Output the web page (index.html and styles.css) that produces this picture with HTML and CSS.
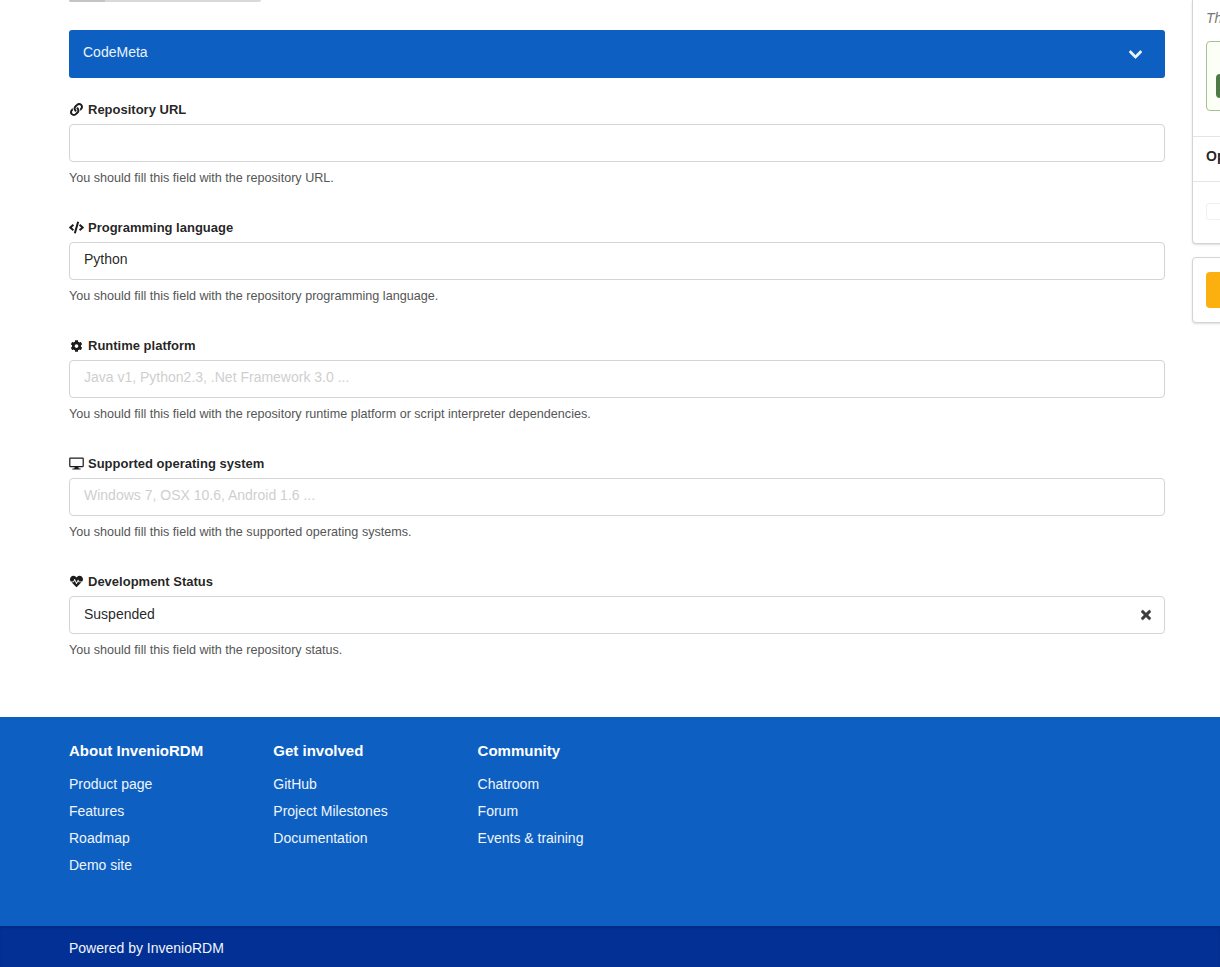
FILE: index.html
```html
<!DOCTYPE html>
<html lang="en">
<head>
<meta charset="utf-8">
<title>CodeMeta</title>
<link rel="stylesheet" href="styles.css">
</head>
<body>
<div class="page">
  <div class="workspace">
    <main class="main">
      <div class="progress"><div class="progress-fill"></div></div>
      <div class="accordion-head">
        <span class="accordion-title">CodeMeta</span>
        <svg class="chevron" viewBox="0 0 448 512"><path d="M207.029 381.476L12.686 187.132c-9.373-9.373-9.373-24.569 0-33.941l22.667-22.667c9.357-9.357 24.522-9.375 33.901-.04L224 284.505l154.745-154.021c9.379-9.335 24.544-9.317 33.901.04l22.667 22.667c9.373 9.373 9.373 24.569 0 33.941L240.971 381.476c-9.373 9.372-24.569 9.372-33.942 0z"/></svg>
      </div>
      <div class="fields">
        <div class="field">
          <label class="label">
            <svg class="icon" viewBox="0 0 512 512"><path d="M326.612 185.391c59.747 59.809 58.927 155.698.36 214.59-.11.12-.24.25-.36.37l-67.2 67.2c-59.27 59.27-155.699 59.262-214.96 0-59.27-59.26-59.27-155.7 0-214.96l37.106-37.106c9.84-9.84 26.786-3.3 27.294 10.606.648 17.722 3.826 35.527 9.69 52.721 1.986 5.822.567 12.262-3.783 16.612l-13.087 13.087c-28.026 28.026-28.905 73.66-1.155 101.96 28.024 28.579 74.086 28.749 102.325.51l67.2-67.19c28.191-28.191 28.073-73.757 0-101.83-3.701-3.694-7.429-6.564-10.341-8.569a16.037 16.037 0 0 1-6.947-12.606c-.396-10.567 3.348-21.456 11.698-29.806l21.054-21.055c5.521-5.521 14.182-6.199 20.584-1.731a152.482 152.482 0 0 1 20.522 17.197zM467.547 44.449c-59.261-59.262-155.69-59.27-214.96 0l-67.2 67.2c-.12.12-.25.25-.36.37-58.566 58.892-59.387 154.781.36 214.59a152.454 152.454 0 0 0 20.521 17.196c6.402 4.468 15.064 3.789 20.584-1.731l21.054-21.055c8.35-8.35 12.094-19.239 11.698-29.806a16.037 16.037 0 0 0-6.947-12.606c-2.912-2.005-6.64-4.875-10.341-8.569-28.073-28.073-28.191-73.639 0-101.83l67.2-67.19c28.239-28.239 74.3-28.069 102.325.51 27.75 28.3 26.872 73.934-1.155 101.96l-13.087 13.087c-4.35 4.35-5.769 10.79-3.783 16.612 5.864 17.194 9.042 34.999 9.69 52.721.509 13.906 17.454 20.446 27.294 10.606l37.106-37.106c59.271-59.259 59.271-155.699.001-214.959z"/></svg>
            Repository URL
          </label>
          <div class="input"></div>
          <p class="help">You should fill this field with the repository URL.</p>
        </div>
        <div class="field">
          <label class="label">
            <svg class="icon" viewBox="0 0 640 512"><path d="M278.9 511.5l-61-17.7c-6.4-1.8-10-8.5-8.2-14.9L346.2 8.7c1.8-6.4 8.5-10 14.9-8.2l61 17.7c6.4 1.8 10 8.5 8.2 14.9L293.8 503.3c-1.9 6.4-8.5 10.1-14.9 8.2zm-114-112.2l43.5-46.4c4.6-4.9 4.3-12.7-.8-17.2L117 256l90.6-79.7c5.1-4.5 5.5-12.3.8-17.2l-43.5-46.4c-4.5-4.8-12.1-5.1-17-.5L3.8 247.2c-5.1 4.7-5.1 12.8 0 17.5l144.1 135.1c4.9 4.6 12.5 4.4 17-.5zm327.2.6l144.1-135.1c5.1-4.7 5.1-12.8 0-17.5L492.1 112.1c-4.8-4.5-12.4-4.3-17 .5L431.6 159c-4.6 4.9-4.3 12.7.8 17.2L523 256l-90.6 79.7c-5.1 4.5-5.5 12.3-.8 17.2l43.5 46.4c4.5 4.9 12.1 5.1 17 .6z"/></svg>
            Programming language
          </label>
          <div class="input">Python</div>
          <p class="help">You should fill this field with the repository programming language.</p>
        </div>
        <div class="field">
          <label class="label">
            <svg class="icon icon-small" viewBox="0 0 512 512"><path d="M487.4 315.7l-42.6-24.6c4.3-23.2 4.3-47 0-70.2l42.6-24.6c4.9-2.8 7.1-8.6 5.5-14-11.1-35.6-30-67.8-54.7-94.6-3.8-4.1-10-5.1-14.8-2.3L380.8 110c-17.9-15.4-38.5-27.3-60.8-35.1V25.8c0-5.6-3.9-10.5-9.4-11.7-36.7-8.2-74.3-7.8-109.2 0-5.5 1.2-9.4 6.1-9.4 11.7V75c-22.2 7.9-42.8 19.8-60.8 35.1L88.7 85.5c-4.9-2.8-11-1.9-14.8 2.3-24.7 26.7-43.6 58.9-54.7 94.6-1.7 5.4.6 11.2 5.5 14L67.3 221c-4.3 23.2-4.3 47 0 70.2l-42.6 24.6c-4.9 2.8-7.1 8.6-5.5 14 11.1 35.6 30 67.8 54.7 94.6 3.8 4.1 10 5.1 14.8 2.3l42.6-24.6c17.9 15.4 38.5 27.3 60.8 35.1v49.2c0 5.6 3.9 10.5 9.4 11.7 36.7 8.2 74.3 7.8 109.2 0 5.5-1.2 9.4-6.1 9.4-11.7v-49.2c22.2-7.9 42.8-19.8 60.8-35.1l42.6 24.6c4.9 2.8 11 1.9 14.8-2.3 24.7-26.7 43.6-58.9 54.7-94.6 1.5-5.5-.7-11.3-5.6-14.1zM256 336c-44.1 0-80-35.9-80-80s35.9-80 80-80 80 35.9 80 80-35.9 80-80 80z"/></svg>
            Runtime platform
          </label>
          <div class="input placeholder">Java v1, Python2.3, .Net Framework 3.0 ...</div>
          <p class="help">You should fill this field with the repository runtime platform or script interpreter dependencies.</p>
        </div>
        <div class="field">
          <label class="label">
            <svg class="icon" viewBox="0 0 576 512"><path d="M528 16H48C21.5 16 0 37.500 0 64v288c0 26.500 21.500 48 48 48h168l-16 48h-56c-13.300 0-24 10.700-24 24s10.700 24 24 24h288c13.300 0 24-10.700 24-24s-10.700-24-24-24h-56l-16-48h168c26.500 0 48-21.500 48-48V64c0-26.500-21.500-48-48-48zm-6 336H54c-3.300 0-6-2.700-6-6V70c0-3.300 2.700-6 6-6h468c3.300 0 6 2.700 6 6v276c0 3.300-2.700 6-6 6z"/></svg>
            Supported operating system
          </label>
          <div class="input placeholder">Windows 7, OSX 10.6, Android 1.6 ...</div>
          <p class="help">You should fill this field with the supported operating systems.</p>
        </div>
        <div class="field">
          <label class="label">
            <svg class="icon" viewBox="0 0 512 512"><path d="M320.2 243.8l-49.7 99.4c-6 12.1-23.4 11.7-28.9-.6l-56.9-126.3-30 71.7H60.6l182.5 186.5c7.1 7.3 18.6 7.3 25.7 0L451.4 288H342.3l-22.1-44.2zM473.7 73.9l-2.4-2.5c-51.5-52.6-135.8-52.6-187.4 0L256 100l-27.9-28.5c-51.5-52.7-135.9-52.7-187.4 0l-2.4 2.4C-10.4 123.7-12.5 203 31 256h102.4l35.9-86.2c5.4-12.9 23.6-13.2 29.4-.4l58.2 129.3 49-97.9c5.9-11.800 22.700-11.800 28.600 0l27.600 55.200H481c43.500-53 41.400-132.300-7.300-182.100z"/></svg>
            Development Status
          </label>
          <div class="input select">
            <span>Suspended</span>
            <svg class="clear" viewBox="0 0 352 512"><path d="M242.72 256l100.07-100.07c12.28-12.28 12.28-32.19 0-44.48l-22.24-22.24c-12.28-12.28-32.19-12.28-44.48 0L176 189.28 75.93 89.21c-12.28-12.28-32.19-12.28-44.48 0L9.21 111.45c-12.28 12.28-12.28 32.19 0 44.48L109.28 256 9.21 356.07c-12.28 12.28-12.28 32.19 0 44.48l22.24 22.24c12.28 12.28 32.2 12.28 44.48 0L176 322.72l100.07 100.07c12.28 12.28 32.2 12.28 44.48 0l22.24-22.24c12.28-12.28 12.28-32.19 0-44.48L242.72 256z"/></svg>
          </div>
          <p class="help">You should fill this field with the repository status.</p>
        </div>
      </div>
    </main>
    <aside class="aside">
      <div class="card card-top">
        <div class="card-section notice-section">
          <p class="notice-text">The</p>
          <div class="notice"><div class="notice-button"></div></div>
        </div>
        <div class="card-section options-title">Options</div>
        <div class="card-section options-body"><div class="checkbox"></div></div>
      </div>
      <div class="card card-action">
        <div class="action-button"></div>
      </div>
    </aside>
  </div>
  <footer class="footer">
    <div class="footer-columns">
      <div class="footer-col">
        <h4 class="footer-title">About InvenioRDM</h4>
        <a class="footer-link">Product page</a>
        <a class="footer-link">Features</a>
        <a class="footer-link">Roadmap</a>
        <a class="footer-link">Demo site</a>
      </div>
      <div class="footer-col">
        <h4 class="footer-title">Get involved</h4>
        <a class="footer-link">GitHub</a>
        <a class="footer-link">Project Milestones</a>
        <a class="footer-link">Documentation</a>
      </div>
      <div class="footer-col">
        <h4 class="footer-title">Community</h4>
        <a class="footer-link">Chatroom</a>
        <a class="footer-link">Forum</a>
        <a class="footer-link">Events &amp; training</a>
      </div>
    </div>
    <div class="footer-bottom">Powered by InvenioRDM</div>
  </footer>
</div>
</body>
</html>
```
FILE: styles.css
```css
* { box-sizing: border-box; }
html, body { margin: 0; padding: 0; background: #fff; }
body { font-family: "Liberation Sans", Arial, sans-serif; color: rgba(0,0,0,.87); overflow: hidden; }
.page { width: 1220px; height: 967px; overflow: hidden; display: flex; flex-direction: column; }
.workspace { height: 717px; display: flex; padding-left: 69px; overflow: hidden; }
.main { width: 1096px; flex: none; }
.progress { width: 192px; height: 2px; background: #d9d9d9; border-radius: 0 0 4px 4px; overflow: hidden; }
.progress-fill { width: 36px; height: 2px; background: #c4c4c4; }
.accordion-head { margin-top: 28px; height: 48px; background: #0d60c2; border-radius: 3px; color: #eaf2fb; font-size: 14px; display: flex; align-items: center; justify-content: space-between; padding: 0 23px 0 14px; }
.accordion-title { padding-bottom: 4px; }
.chevron { width: 13px; height: 15px; fill: #eaf2fb; margin-top: 1px; stroke: #eaf2fb; stroke-width: 24; }
.fields { margin-top: 24px; }
.field { height: 118px; }
.label { height: 15px; display: flex; align-items: center; gap: 4px; font-size: 13px; font-weight: 700; line-height: 15px; color: rgba(0,0,0,.87); }
.icon { height: 13px; width: 15px; flex: none; fill: #1c1c1c; }
.icon-small { height: 12px; }
.input { margin-top: 7px; height: 38px; border: 1px solid #d4d4d5; border-radius: 4px; padding: 0 14px 4px; display: flex; align-items: center; font-size: 14px; color: rgba(0,0,0,.87); background: #fff; }
.placeholder { color: #cfcfcf; }
.select { justify-content: space-between; padding: 0 13px 2px 14px; }
.clear { width: 10px; height: 14px; fill: #3c3c3c; stroke: #3c3c3c; stroke-width: 20; margin-top: 2px; }
.help { margin: 9px 0 0; font-size: 12.6px; line-height: 14px; color: #555; }
.aside { margin-left: 27px; width: 300px; flex: none; }
.card { background: #fff; border: 1px solid #d4d4d5; border-radius: 4px; box-shadow: 0 1px 2px rgba(34,36,38,.15); }
.card-top { height: 244px; border-top: 0; border-radius: 0 0 4px 4px; }
.card-section { padding: 0 13px; }
.notice-section { height: 137px; border-bottom: 1px solid #e4e4e4; padding-top: 10px; }
.notice-text { margin: 0; font-size: 14px; line-height: 16px; font-style: italic; color: #777; }
.notice { margin-top: 15px; height: 70px; border: 1px solid #a3c293; border-radius: 4px; background: #fcfff5; padding: 32px 9px 0; }
.notice-button { height: 24px; background: #4f7a48; border-radius: 4px; }
.options-title { height: 45px; border-bottom: 1px solid #e4e4e4; font-size: 14px; font-weight: 700; line-height: 38px; }
.options-body { padding-top: 21px; }
.checkbox { width: 17px; height: 17px; border: 1px solid #f0f0f0; border-radius: 3px; }
.card-action { margin-top: 13px; height: 66px; padding: 14px 13px; }
.action-button { height: 36px; background: #fbb00f; border-radius: 4px; }
.footer { flex: 1; background: #0d60c2; color: #fff; display: flex; flex-direction: column; }
.footer-columns { height: 209px; padding: 25px 0 0 69px; display: flex; }
.footer-col { width: 204.3px; display: flex; flex-direction: column; align-items: flex-start; }
.footer-title { margin: 0 0 12px; font-size: 15px; line-height: 17px; font-weight: 700; }
.footer-link { font-size: 14px; line-height: 27px; color: #f0f5fb; }
.footer-bottom { flex: 1; background: #033094; padding: 2px 0 0 69px; display: flex; align-items: center; font-size: 14px; box-shadow: inset 0 2px 2px rgba(0,0,0,.1); color: #f0f5fb; }
```
